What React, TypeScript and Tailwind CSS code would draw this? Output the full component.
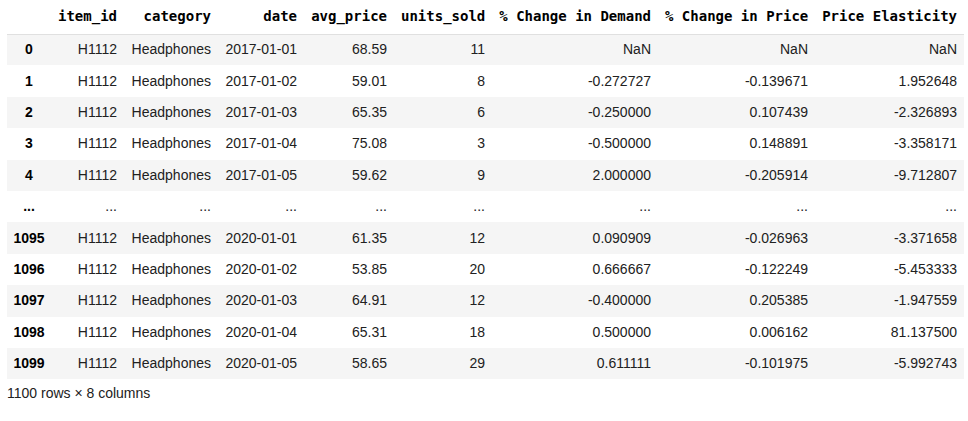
const columns = [
  { label: "item_id", w: "w-[73px]" },
  { label: "category", w: "w-[94px]" },
  { label: "date", w: "w-[86px]" },
  { label: "avg_price", w: "w-[90px]" },
  { label: "units_sold", w: "w-[98px]" },
  { label: "% Change in Demand", w: "w-[166px]" },
  { label: "% Change in Price", w: "w-[157px]" },
  { label: "Price Elasticity", w: "w-[149px]" },
];

const rows: string[][] = [
  ["0", "H1112", "Headphones", "2017-01-01", "68.59", "11", "NaN", "NaN", "NaN"],
  ["1", "H1112", "Headphones", "2017-01-02", "59.01", "8", "-0.272727", "-0.139671", "1.952648"],
  ["2", "H1112", "Headphones", "2017-01-03", "65.35", "6", "-0.250000", "0.107439", "-2.326893"],
  ["3", "H1112", "Headphones", "2017-01-04", "75.08", "3", "-0.500000", "0.148891", "-3.358171"],
  ["4", "H1112", "Headphones", "2017-01-05", "59.62", "9", "2.000000", "-0.205914", "-9.712807"],
  ["...", "...", "...", "...", "...", "...", "...", "...", "..."],
  ["1095", "H1112", "Headphones", "2020-01-01", "61.35", "12", "0.090909", "-0.026963", "-3.371658"],
  ["1096", "H1112", "Headphones", "2020-01-02", "53.85", "20", "0.666667", "-0.122249", "-5.453333"],
  ["1097", "H1112", "Headphones", "2020-01-03", "64.91", "12", "-0.400000", "0.205385", "-1.947559"],
  ["1098", "H1112", "Headphones", "2020-01-04", "65.31", "18", "0.500000", "0.006162", "81.137500"],
  ["1099", "H1112", "Headphones", "2020-01-05", "58.65", "29", "0.611111", "-0.101975", "-5.992743"],
];

export default function App() {
  return (
    <div className="min-h-screen bg-white px-[7px] text-[14px] text-[#212121] font-['Liberation_Sans',Arial,sans-serif]">
      <table className="table-fixed border-collapse w-[957px]">
        <thead>
          <tr className="h-[34px] border-b border-[#e0e0e0]">
            <th className="w-[44px] p-0" />
            {columns.map((c) => (
              <th
                key={c.label}
                className={`${c.w} px-[7px] py-0 text-right font-bold text-black whitespace-nowrap font-['DejaVu_Sans_Mono',monospace]`}
              >
                {c.label}
              </th>
            ))}
          </tr>
        </thead>
        <tbody>
          {rows.map((r, i) => (
            <tr key={r[0] + i} className={`h-[31.4px] ${i % 2 === 0 ? "bg-[#f5f5f5]" : "bg-white"}`}>
              <th className="p-0 text-center font-bold text-black">{r[0]}</th>
              {r.slice(1).map((v, j) => (
                <td key={j} className="px-[7px] py-0 text-right whitespace-nowrap">
                  {v}
                </td>
              ))}
            </tr>
          ))}
        </tbody>
      </table>
      <p className="mt-[6px] leading-4">1100 rows × 8 columns</p>
    </div>
  );
}
